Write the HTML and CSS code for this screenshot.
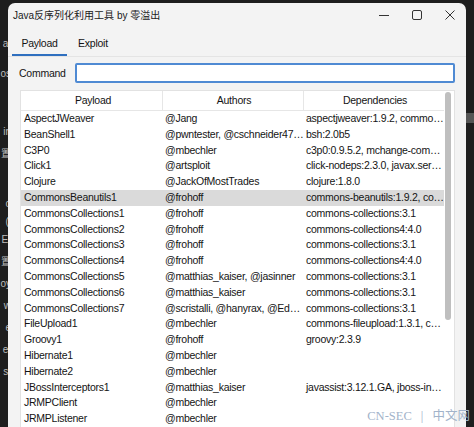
FILE: index.html
```html
<!DOCTYPE html>
<html lang="zh-CN">
<head>
  <meta charset="UTF-8">
  <meta name="viewport" content="width=device-width, initial-scale=1.0">
  <title>Java反序列化利用工具</title>
  <link rel="stylesheet" href="styles.css">
</head>
<body>
  <div class="screen">
    <div class="side side-left">
      <span class="frag f1">at</span>
      <span class="frag f2">os</span>
      <span class="frag f3">in</span>
      <span class="frag f4">置</span>
      <span class="frag f5">o</span>
      <span class="frag f6">(l</span>
      <span class="frag f7">E:</span>
      <span class="frag f8">置</span>
      <span class="frag f9">oy</span>
      <span class="frag f10">w</span>
      <span class="frag f11">e</span>
      <span class="frag f12">e.</span>
      <span class="frag f13">s.</span>
    </div>

    <div class="window">
      <div class="titlebar">
        <span class="title">Java反序列化利用工具 by 零溢出</span>
        <div class="controls">
          <span class="ctl">
            <svg width="10" height="10" viewBox="0 0 10 10"><path d="M0 5.5h10" stroke="#333" stroke-width="1"/></svg>
          </span>
          <span class="ctl">
            <svg width="10" height="10" viewBox="0 0 10 10"><rect x="0.5" y="0.5" width="9" height="9" rx="1.5" fill="none" stroke="#333" stroke-width="1"/></svg>
          </span>
          <span class="ctl">
            <svg width="10" height="10" viewBox="0 0 10 10"><path d="M0.5 0.5l9 9M9.5 0.5l-9 9" stroke="#333" stroke-width="1"/></svg>
          </span>
        </div>
      </div>

      <div class="tabs">
        <span class="tab active">Payload</span>
        <span class="tab tab-exploit">Exploit</span>
      </div>

      <div class="panel">
        <div class="command-row">
          <label class="command-label" for="command">Command</label>
          <input class="command-input" id="command" type="text">
        </div>

        <div class="table-box">
          <div class="table-main">
            <div class="row thead">
              <span class="cell">Payload</span>
              <span class="cell">Authors</span>
              <span class="cell">Dependencies</span>
            </div>
            <div class="row"><span class="cell">AspectJWeaver</span><span class="cell">@Jang</span><span class="cell">aspectjweaver:1.9.2, commo…</span></div>
            <div class="row"><span class="cell">BeanShell1</span><span class="cell">@pwntester, @cschneider47…</span><span class="cell">bsh:2.0b5</span></div>
            <div class="row"><span class="cell">C3P0</span><span class="cell">@mbechler</span><span class="cell">c3p0:0.9.5.2, mchange-com…</span></div>
            <div class="row"><span class="cell">Click1</span><span class="cell">@artsploit</span><span class="cell">click-nodeps:2.3.0, javax.serv…</span></div>
            <div class="row"><span class="cell">Clojure</span><span class="cell">@JackOfMostTrades</span><span class="cell">clojure:1.8.0</span></div>
            <div class="row selected"><span class="cell">CommonsBeanutils1</span><span class="cell">@frohoff</span><span class="cell">commons-beanutils:1.9.2, co…</span></div>
            <div class="row"><span class="cell">CommonsCollections1</span><span class="cell">@frohoff</span><span class="cell">commons-collections:3.1</span></div>
            <div class="row"><span class="cell">CommonsCollections2</span><span class="cell">@frohoff</span><span class="cell">commons-collections4:4.0</span></div>
            <div class="row"><span class="cell">CommonsCollections3</span><span class="cell">@frohoff</span><span class="cell">commons-collections:3.1</span></div>
            <div class="row"><span class="cell">CommonsCollections4</span><span class="cell">@frohoff</span><span class="cell">commons-collections4:4.0</span></div>
            <div class="row"><span class="cell">CommonsCollections5</span><span class="cell">@matthias_kaiser, @jasinner</span><span class="cell">commons-collections:3.1</span></div>
            <div class="row"><span class="cell">CommonsCollections6</span><span class="cell">@matthias_kaiser</span><span class="cell">commons-collections:3.1</span></div>
            <div class="row"><span class="cell">CommonsCollections7</span><span class="cell">@scristalli, @hanyrax, @Edo…</span><span class="cell">commons-collections:3.1</span></div>
            <div class="row"><span class="cell">FileUpload1</span><span class="cell">@mbechler</span><span class="cell">commons-fileupload:1.3.1, c…</span></div>
            <div class="row"><span class="cell">Groovy1</span><span class="cell">@frohoff</span><span class="cell">groovy:2.3.9</span></div>
            <div class="row"><span class="cell">Hibernate1</span><span class="cell">@mbechler</span><span class="cell"></span></div>
            <div class="row"><span class="cell">Hibernate2</span><span class="cell">@mbechler</span><span class="cell"></span></div>
            <div class="row"><span class="cell">JBossInterceptors1</span><span class="cell">@matthias_kaiser</span><span class="cell">javassist:3.12.1.GA, jboss-int…</span></div>
            <div class="row"><span class="cell">JRMPClient</span><span class="cell">@mbechler</span><span class="cell"></span></div>
            <div class="row"><span class="cell">JRMPListener</span><span class="cell">@mbechler</span><span class="cell"></span></div>
          </div>
          <div class="scrollbar"><div class="thumb"></div></div>
        </div>
      </div>
    </div>

    <div class="side side-right"><div class="side-bar"></div></div>

    <div class="watermark">CN-SEC <span class="wm-sep">|</span> 中文网</div>
  </div>
</body>
</html>
```

FILE: styles.css
```css
/* Screen / desktop */
body {
  margin: 0;
  padding: 0;
  background-color: #1e1e1e;
  font-family: "Liberation Sans", "Noto Sans CJK SC", sans-serif;
  color: #141414;
}

.screen {
  position: relative;
  display: flex;
  width: 474px;
  height: 427px;
  overflow: hidden;
  background-color: #1e1e1e;
}

.side {
  flex: 0 0 8px;
  overflow: hidden;
}

.side-left {
  display: flex;
  flex-direction: column;
  align-items: flex-end;
  padding-top: 33px;
  box-sizing: border-box;
}

.frag {
  display: block;
  height: 22px;
  line-height: 22px;
  font-size: 10px;
  color: #bdbdbd;
  white-space: nowrap;
  margin-right: -3px;
}

.f2 { margin-top: 8px; }
.f3 { margin-top: 36px; }
.f5 { margin-top: 28px; }
.f6 { height: 14px; line-height: 14px; }

.side-right {
  padding-top: 113px;
}

.side-bar {
  height: 10px;
  background-color: #555;
}

/* Window */
.window {
  flex: 0 0 458px;
  margin-top: 3px;
  background-color: #f3f3f3;
  border-radius: 7px 7px 0 0;
  display: flex;
  flex-direction: column;
}

.titlebar {
  height: 23px;
  display: flex;
  align-items: center;
  justify-content: space-between;
  padding-left: 5px;
}

.title {
  font-size: 10px;
  color: #1a1a1a;
}

.controls {
  display: flex;
  height: 100%;
}

.ctl {
  width: 33px;
  display: flex;
  align-items: center;
  justify-content: center;
}

/* Tabs */
.tabs {
  height: 31px;
  display: flex;
  padding-left: 4px;
  border-bottom: 1px solid #e4e4e4;
  box-sizing: border-box;
}

.tab {
  width: 52px;
  display: flex;
  align-items: center;
  justify-content: center;
  padding-top: 4px;
  font-size: 10.5px;
  letter-spacing: -0.25px;
}

.tab.active {
  width: 55px;
  box-shadow: inset 0 -2px 0 #2f6fbf;
}

/* Panel */
.panel {
  flex: 1;
  padding: 6px 11px 0 11px;
  display: flex;
  flex-direction: column;
  min-height: 0;
}

.command-row {
  display: flex;
  align-items: center;
  gap: 9px;
}

.command-label {
  font-size: 10.5px;
  letter-spacing: -0.25px;
  width: 47px;
  white-space: nowrap;
}

.command-input {
  flex: 1;
  height: 20px;
  box-sizing: border-box;
  border: 2px solid #4f8ad3;
  border-radius: 2px;
  background-color: #fff;
  outline: none;
  padding: 0 4px;
}

.table-box {
  flex: 1;
  margin: 7px 0 0 1px;
  display: flex;
  background-color: #fff;
  border: 1px solid #e2e2e2;
  border-bottom: none;
  min-height: 0;
}

.table-main {
  flex: 1;
}

.row {
  display: grid;
  grid-template-columns: 142px 141px 1fr;
  height: 15.8px;
  font-size: 10.5px;
  letter-spacing: -0.25px;
  line-height: 15.8px;
}

.row .cell {
  padding-left: 3px;
  white-space: nowrap;
  overflow: hidden;
  text-overflow: ellipsis;
}

.row .cell + .cell {
  padding-left: 2px;
}

.thead {
  height: 19px;
  line-height: 19px;
  border-bottom: 1px solid #e6e6e6;
  text-align: center;
}

.thead .cell {
  border-right: 1px solid #e6e6e6;
}

.thead .cell:last-child {
  border-right: none;
}

.row.selected {
  background-color: #dadada;
}

.scrollbar {
  width: 10px;
  padding: 1px 0 0 1px;
  box-sizing: border-box;
}

.thumb {
  width: 6px;
  height: 228px;
  border-radius: 3px;
  background-color: #bfbfbf;
}

/* Watermark overlay */
.watermark {
  position: absolute;
  right: 4px;
  bottom: 3px;
  font-family: "Liberation Serif", "Noto Sans CJK SC", serif;
  font-size: 12.5px;
  color: #a2b3ca;
  white-space: nowrap;
}

.wm-sep {
  margin: 0 6px;
}
```
